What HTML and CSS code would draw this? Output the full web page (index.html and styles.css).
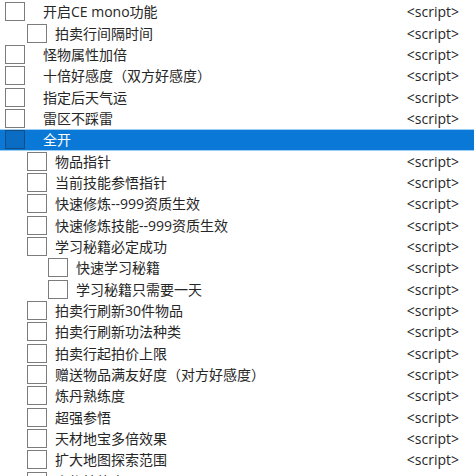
FILE: index.html
```html
<!DOCTYPE html>
<html lang="zh-CN">
<head>
<meta charset="utf-8">
<title>Cheat table</title>
<link rel="stylesheet" href="styles.css">
</head>
<body>
<div class="list">
  <div class="row l0"><span class="box"></span><span class="name">开启CE mono功能</span><span class="val">&lt;script&gt;</span></div>
  <div class="row l1"><span class="box"></span><span class="name">拍卖行间隔时间</span><span class="val">&lt;script&gt;</span></div>
  <div class="row l0"><span class="box"></span><span class="name">怪物属性加倍</span><span class="val">&lt;script&gt;</span></div>
  <div class="row l0"><span class="box"></span><span class="name">十倍好感度（双方好感度）</span><span class="val">&lt;script&gt;</span></div>
  <div class="row l0"><span class="box"></span><span class="name">指定后天气运</span><span class="val">&lt;script&gt;</span></div>
  <div class="row l0"><span class="box"></span><span class="name">雷区不踩雷</span><span class="val">&lt;script&gt;</span></div>
  <div class="row l0 selected"><span class="box"></span><span class="name">全开</span><span class="val"></span></div>
  <div class="row l1"><span class="box"></span><span class="name">物品指针</span><span class="val">&lt;script&gt;</span></div>
  <div class="row l1"><span class="box"></span><span class="name">当前技能参悟指针</span><span class="val">&lt;script&gt;</span></div>
  <div class="row l1"><span class="box"></span><span class="name">快速修炼--999资质生效</span><span class="val">&lt;script&gt;</span></div>
  <div class="row l1"><span class="box"></span><span class="name">快速修炼技能--999资质生效</span><span class="val">&lt;script&gt;</span></div>
  <div class="row l1"><span class="box"></span><span class="name">学习秘籍必定成功</span><span class="val">&lt;script&gt;</span></div>
  <div class="row l2"><span class="box"></span><span class="name">快速学习秘籍</span><span class="val">&lt;script&gt;</span></div>
  <div class="row l2"><span class="box"></span><span class="name">学习秘籍只需要一天</span><span class="val">&lt;script&gt;</span></div>
  <div class="row l1"><span class="box"></span><span class="name">拍卖行刷新30件物品</span><span class="val">&lt;script&gt;</span></div>
  <div class="row l1"><span class="box"></span><span class="name">拍卖行刷新功法种类</span><span class="val">&lt;script&gt;</span></div>
  <div class="row l1"><span class="box"></span><span class="name">拍卖行起拍价上限</span><span class="val">&lt;script&gt;</span></div>
  <div class="row l1"><span class="box"></span><span class="name">赠送物品满友好度（对方好感度）</span><span class="val">&lt;script&gt;</span></div>
  <div class="row l1"><span class="box"></span><span class="name">炼丹熟练度</span><span class="val">&lt;script&gt;</span></div>
  <div class="row l1"><span class="box"></span><span class="name">超强参悟</span><span class="val">&lt;script&gt;</span></div>
  <div class="row l1"><span class="box"></span><span class="name">天材地宝多倍效果</span><span class="val">&lt;script&gt;</span></div>
  <div class="row l1"><span class="box"></span><span class="name">扩大地图探索范围</span><span class="val">&lt;script&gt;</span></div>
  <div class="row l1"><span class="box"></span><span class="name">人物技能点无限</span><span class="val">&lt;script&gt;</span></div>
</div>
</body>
</html>
```

FILE: styles.css
```css
html, body {
  margin: 0;
  padding: 0;
  background: #ffffff;
}

body {
  width: 474px;
  height: 476px;
  overflow: hidden;
  font-family: "Open Sans", "Noto Sans CJK SC", sans-serif;
  font-size: 14px;
  color: #262626;
}

.list {
  display: flex;
  flex-direction: column;
  padding-top: 1.33px;
}

.row {
  display: flex;
  align-items: center;
  height: 21.333px;
  box-sizing: border-box;
  white-space: nowrap;
}

.box {
  flex: none;
  width: 20px;
  height: 19px;
  box-sizing: border-box;
  border: 1px solid #7c7c7c;
  background: #ffffff;
}

.name {
  line-height: 21px;
}

.val {
  margin-left: auto;
  padding-right: 15px;
  line-height: 21px;
}

.l0 .box { margin-left: 5px; }
.l0 .name { margin-left: 18px; }

.l1 .box { margin-left: 27px; }
.l1 .name { margin-left: 8px; }

.l2 .box { margin-left: 48px; }
.l2 .name { margin-left: 8px; }

.selected {
  background: #0a78d6;
  color: #ffffff;
  border-top: 1px solid #9ccdf2;
  border-bottom: 1px solid #9ccdf2;
}

.selected .box {
  background: #0a6cc2;
  border-color: #134d82;
}
```
